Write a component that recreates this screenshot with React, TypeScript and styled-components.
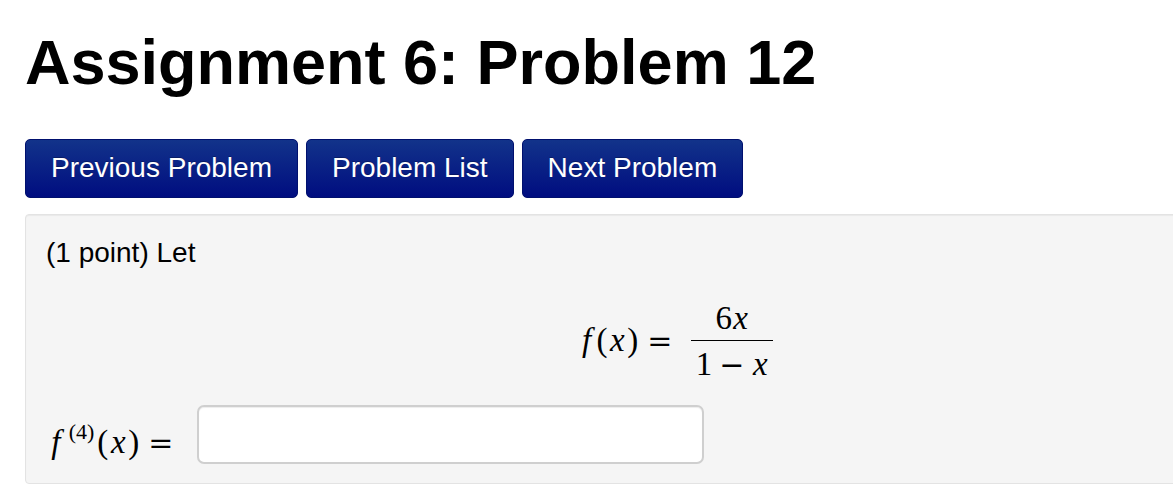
import React from "react";
import styled, { createGlobalStyle } from "styled-components";

const GlobalStyle = createGlobalStyle`
  html, body {
    margin: 0;
    padding: 0;
    overflow: hidden;
    background: #fff;
  }
  body {
    font-family: "Liberation Sans", Arial, sans-serif;
    color: #000;
  }
`;

const Page = styled.div`
  padding: 0 25px;
`;

const Title = styled.h1`
  margin: 25px 0 0;
  font-size: 63px;
  line-height: 1.2;
  font-weight: bold;
`;

const NavBar = styled.div`
  display: flex;
  gap: 8px;
  margin-top: 38px;
`;

const NavButton = styled.button`
  display: inline-flex;
  align-items: center;
  justify-content: center;
  height: 59px;
  padding: 0 25px;
  box-sizing: border-box;
  font-family: "Liberation Sans", Arial, sans-serif;
  font-size: 28px;
  color: #fff;
  text-shadow: 0 -1px 0 rgba(0, 0, 0, 0.25);
  background: linear-gradient(to bottom, #12338a, #000d80);
  border: 1px solid #00106e;
  border-radius: 5px;
  cursor: pointer;
`;

const ProblemPanel = styled.div`
  width: 1300px;
  box-sizing: border-box;
  margin-top: 16px;
  padding: 18px 20px 19px;
  background: #f5f5f5;
  border: 1px solid #e3e3e3;
  border-radius: 4px;
  box-shadow: inset 0 1px 1px rgba(0, 0, 0, 0.05);
`;

const Intro = styled.p`
  margin: 0;
  font-size: 28px;
  line-height: 1.4;
`;

const DisplayMath = styled.div`
  display: flex;
  justify-content: center;
  align-items: center;
  margin: 28px 0 25px;
  font-family: "Liberation Serif", "Times New Roman", serif;
  font-size: 33px;
`;

const MathText = styled.span`
  display: inline-block;
  white-space: nowrap;
  line-height: 30px;
`;

const Ident = styled.i<{ pad?: number }>`
  font-style: italic;
  padding: 0 ${(p) => p.pad ?? 0.06}em;
`;

const Op = styled.span<{ space?: number }>`
  padding: 0 ${(p) => p.space ?? 0}em;
`;

const Rel = styled.span<{ space?: number }>`
  font-family: "DejaVu Serif", serif;
  font-size: 30px;
  padding: 0 ${(p) => p.space ?? 0}em;
`;

const Fraction = styled.span`
  display: inline-flex;
  flex-direction: column;
  align-items: center;
  margin-left: 0.3em;
  margin-top: 3px;
`;

const Numerator = styled(MathText)`
  padding-bottom: 7px;
`;

const Bar = styled.span`
  align-self: stretch;
  width: 82px;
  height: 1.5px;
  background: #000;
`;

const Denominator = styled(MathText)`
  padding-top: 8px;
`;

const AnswerRow = styled.div`
  display: flex;
  align-items: center;
`;

const AnswerLabel = styled(MathText)`
  font-family: "Liberation Serif", "Times New Roman", serif;
  font-size: 33px;
  margin-top: 6px;
`;

const Sup = styled.span`
  font-size: 22px;
  vertical-align: 14px;
  padding: 0 3px 0 3px;
`;

const AnswerInput = styled.input`
  width: 507px;
  height: 59px;
  box-sizing: border-box;
  margin-left: 15px;
  padding: 4px 12px;
  font-size: 26px;
  background: #fff;
  border: 2px solid #cfcfcf;
  border-radius: 7px;
  box-shadow: inset 0 1px 1px rgba(0, 0, 0, 0.075);
  outline: none;
`;

export default function App() {
  return (
    <Page>
      <GlobalStyle />
      <Title>Assignment 6: Problem 12</Title>
      <NavBar>
        <NavButton>Previous Problem</NavButton>
        <NavButton>Problem List</NavButton>
        <NavButton>Next Problem</NavButton>
      </NavBar>
      <ProblemPanel>
        <Intro>(1 point) Let</Intro>
        <DisplayMath>
          <MathText>
            <Ident pad={0.16}>f</Ident>
            <Op>(</Op>
            <Ident pad={0.08}>x</Ident>
            <Op>)</Op>
            <Rel space={0.3}>=</Rel>
          </MathText>
          <Fraction>
            <Numerator>
              <Op>6</Op>
              <Ident pad={0.04}>x</Ident>
            </Numerator>
            <Bar />
            <Denominator>
              <Op>1</Op>
              <Rel space={0.24}>−</Rel>
              <Ident pad={0.04}>x</Ident>
            </Denominator>
          </Fraction>
        </DisplayMath>
        <AnswerRow>
          <AnswerLabel>
            <Ident pad={0.16}>f</Ident>
            <Sup>(4)</Sup>
            <Op>(</Op>
            <Ident pad={0.08}>x</Ident>
            <Op>)</Op>
            <Rel space={0.3}>=</Rel>
          </AnswerLabel>
          <AnswerInput type="text" aria-label="answer" />
        </AnswerRow>
      </ProblemPanel>
    </Page>
  );
}
